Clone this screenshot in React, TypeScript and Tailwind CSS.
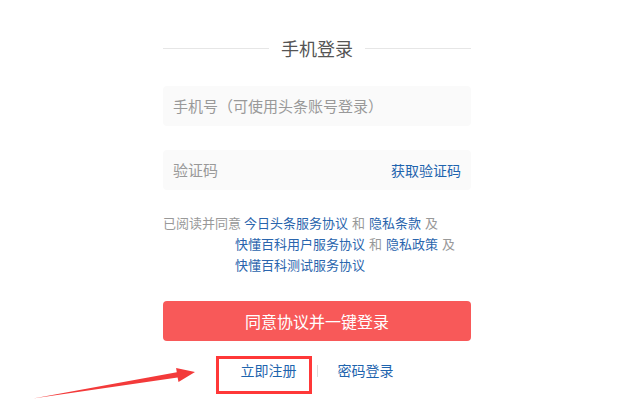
const font = { fontFamily: '"Noto Sans CJK SC", "Microsoft YaHei", sans-serif' };

function Link({ children }: { children: React.ReactNode }) {
  return <span className="text-[#2a65ad] mx-[4px] first:ml-0">{children}</span>;
}

export default function App() {
  return (
    <div className="relative w-[634px] h-[408px] bg-white overflow-hidden" style={font}>
      <div className="w-[308px] mx-auto pt-[36px]">
        {/* title */}
        <div className="flex items-center gap-[12px] h-[24px]">
          <div className="flex-1 h-px bg-[#e6e6e6]" />
          <span className="text-[18px] leading-[24px] text-[#555]">手机登录</span>
          <div className="flex-1 h-px bg-[#e6e6e6]" />
        </div>

        {/* inputs */}
        <div className="mt-[26px] h-[40px] rounded-[4px] bg-[#fafafa] flex items-center px-[10px]">
          <span className="text-[15px] text-[#999]">手机号（可使用头条账号登录）</span>
        </div>
        <div className="mt-[24px] h-[40px] rounded-[4px] bg-[#fafafa] flex items-center justify-between px-[10px]">
          <span className="text-[15px] text-[#999]">验证码</span>
          <span className="text-[14px] text-[#1e64ae]">获取验证码</span>
        </div>

        {/* agreement */}
        <div className="mt-[22px] text-[13px] leading-[21px] text-[#999]">
          <div>
            已阅读并同意 <Link>今日头条服务协议</Link>和<Link>隐私条款</Link>及
          </div>
          <div className="pl-[72px]">
            <span className="text-[#2a65ad] mr-[4px]">快懂百科用户服务协议</span>和<Link>隐私政策</Link>及
          </div>
          <div className="pl-[72px]">
            <span className="text-[#2a65ad]">快懂百科测试服务协议</span>
          </div>
        </div>

        {/* submit */}
        <button className="mt-[26px] w-full h-[40px] rounded-[4px] bg-[#f85959] text-white text-[16px]">
          同意协议并一键登录
        </button>

        {/* bottom links */}
        <div className="mt-[19px] flex items-center justify-center text-[14px] text-[#1e64ae]">
          <span className="px-[20px]">立即注册</span>
          <div className="w-px h-[12px] bg-[#ddd]" />
          <span className="px-[20px]">密码登录</span>
        </div>
      </div>

      {/* annotation: red box */}
      <div className="absolute left-[216px] top-[356px] w-[96px] h-[38px] border-[3px] border-[#ff3838]" />

      {/* annotation: arrow */}
      <svg className="absolute left-0 top-0" width="634" height="408" viewBox="0 0 634 408">
        <polygon
          points="33,398.5 177.6,377.6 178.5,382 195,372 176.1,368 176.8,372.2"
          fill="#f33a3a"
        />
      </svg>
    </div>
  );
}
